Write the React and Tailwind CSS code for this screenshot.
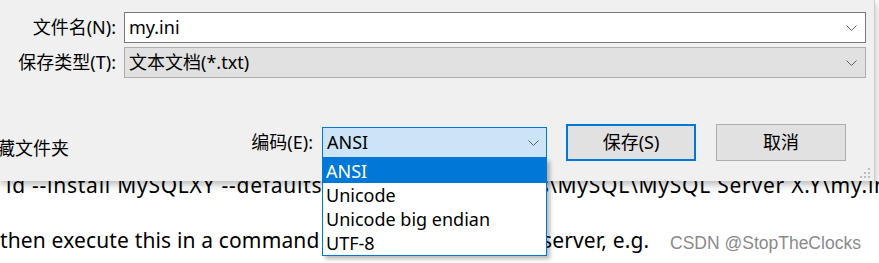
import React from 'react';

const Chevron = () => (
  <svg width="11" height="6" viewBox="0 0 11 6" fill="none">
    <polyline points="0.5,0.5 5.5,5.5 10.5,0.5" stroke="#5f5f5f" strokeWidth="1" />
  </svg>
);

const Gripper = () => (
  <svg width="10" height="10" viewBox="0 0 10 10">
    {[[8, 0], [4, 4], [8, 4], [0, 8], [4, 8], [8, 8]].map(([x, y]) => (
      <rect key={`${x}-${y}`} x={x} y={y} width="2" height="2" fill="#bdbdbd" />
    ))}
  </svg>
);

const encodings = ['ANSI', 'Unicode', 'Unicode big endian', 'UTF-8'];

export default function App() {
  return (
    <div className="relative w-[879px] h-[263px] overflow-hidden bg-white">
      {/* page content behind the save dialog */}
      <div className="pt-[172px] font-['Noto_Sans',sans-serif] text-[21px] leading-[26px] text-black whitespace-nowrap">
        <div className="flex h-[26px] tracking-[0.75px]">
          <span className="pl-[6px] w-[549px] shrink-0 overflow-hidden">ld --install MySQLXY --defaults-file=C:\Program Files</span>
          <span>\MySQL\MySQL Server X.Y\my.ini</span>
        </div>
        <div className="h-[29px]" />
        <div className="flex h-[26px] tracking-[0.15px]">
          <span className="w-[542px] shrink-0 overflow-hidden">then execute this in a command prompt to start the</span>
          <span>server, e.g.</span>
        </div>
        <div className="pl-[24px] pt-[5px] h-[31px]">net start MySQLXY</div>
      </div>

      <div className="absolute left-[670px] top-[231px] font-['Liberation_Sans',sans-serif] text-[17.5px] leading-[24px] text-[#8a8a8a]">
        CSDN @StopTheClocks
      </div>

      {/* save dialog */}
      <div className="absolute top-0 left-0 w-[875px] h-[181px] bg-[#f0f0f0] border-r border-[#cfcfcf] shadow-[0_3px_8px_rgba(0,0,0,0.3)] font-['Noto_Sans','Noto_Sans_CJK_SC',sans-serif] text-[18px] text-black">
        <div className="flex items-center pt-[12px]">
          <div className="w-[116px] text-right">文件名(N):</div>
          <div className="ml-[8px] w-[742px] h-[31px] border border-[#7a7a7a] bg-white flex items-center justify-between pl-[4px] pr-[8px]">
            <span>my.ini</span>
            <Chevron />
          </div>
        </div>
        <div className="flex items-center mt-[4px]">
          <div className="w-[116px] text-right">保存类型(T):</div>
          <div className="ml-[8px] w-[742px] h-[31px] border border-[#adadad] bg-[#e1e1e1] flex items-center justify-between pl-[4px] pr-[8px]">
            <span>文本文档(*.txt)</span>
            <Chevron />
          </div>
        </div>

        <div className="flex items-center justify-between mt-[46px] h-[37px] pr-[28px]">
          <div className="-ml-[21px] mt-[11px]">隐藏文件夹</div>
          <div className="flex items-center">
            <span>编码(E):</span>
            <div className="relative ml-[9px] w-[225px] h-[31px] border border-[#0078d7] bg-[#cce4f7] flex items-center justify-between pl-[4px] pr-[7px]">
              <span>ANSI</span>
              <Chevron />
              <div className="absolute left-[-1px] top-[30px] w-[225px] border border-[#0078d7] bg-white shadow-[3px_3px_4px_rgba(0,0,0,0.28)] z-10">
                {encodings.map((e, i) => (
                  <div
                    key={e}
                    className={`h-[24px] pl-[3px] flex items-center ${i === 0 ? 'bg-[#0078d7] text-white' : ''}`}
                  >
                    {e}
                  </div>
                ))}
              </div>
            </div>
            <button className="ml-[19px] w-[130px] h-[37px] border-2 border-[#0078d7] bg-[#e1e1e1]">保存(S)</button>
            <button className="ml-[20px] w-[130px] h-[37px] border border-[#adadad] bg-[#e1e1e1]">取消</button>
          </div>
        </div>

        <div className="absolute right-[4px] bottom-[3px]">
          <Gripper />
        </div>
      </div>
    </div>
  );
}
